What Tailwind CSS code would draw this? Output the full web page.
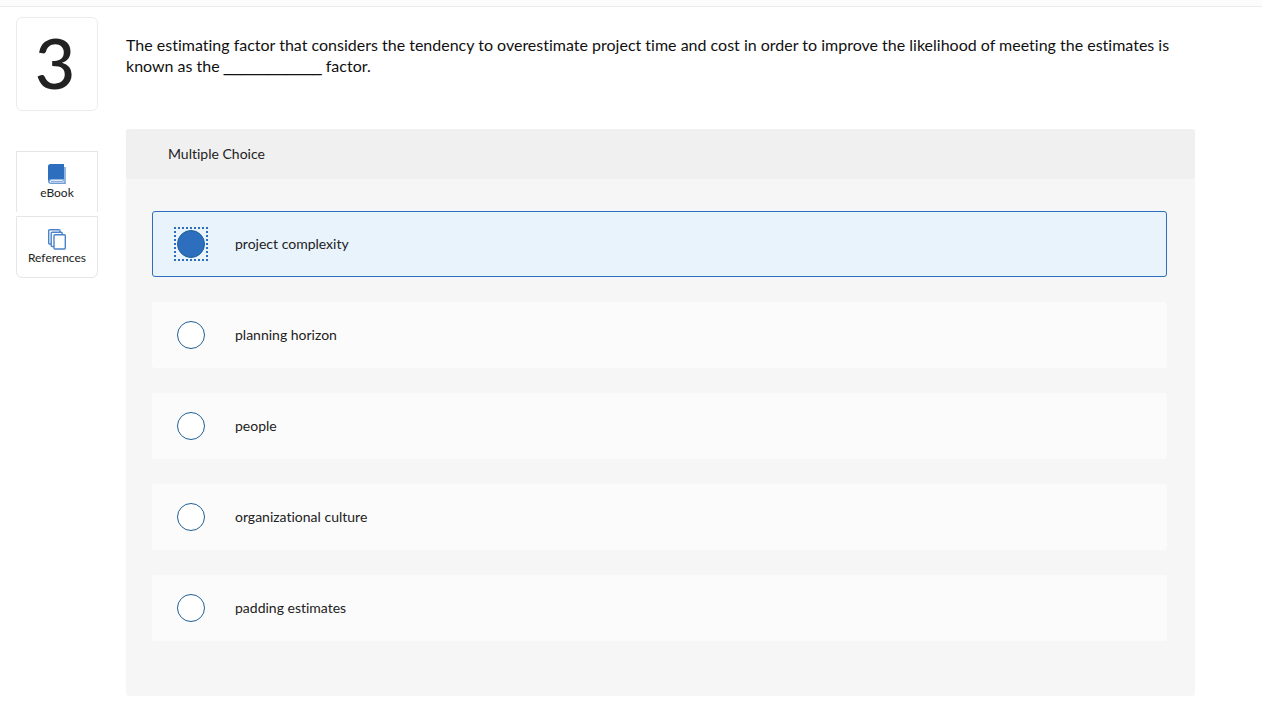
<!DOCTYPE html>
<html lang="en">
<head>
    <meta charset="UTF-8">
    <meta name="viewport" content="width=device-width, initial-scale=1.0">
    <title>Question 3</title>
    <script src="https://cdn.jsdelivr.net/npm/@tailwindcss/browser@4"></script>
</head>
<body class="bg-white font-['Lato','Liberation_Sans',sans-serif] text-[#222] [font-variant-ligatures:none]">
    <header class="h-[7px] bg-[#fcfcfc] border-b border-[#ececec]"></header>

    <div class="flex items-start gap-7 pl-4 pr-[67px] pt-[10px] pb-8">
        <!-- Question number and resources -->
        <aside class="w-[82px] shrink-0">
            <div class="h-[94px] flex items-center justify-center pb-1 pr-1 border border-[#ececec] rounded-md">
                <h1 class="text-[70px] leading-none font-medium">3</h1>
            </div>

            <nav class="mt-10 text-xs leading-4" aria-label="Resources">
                <a href="#ebook" class="h-[61px] flex flex-col items-center pt-3 border border-b-0 border-[#e6e6e6]">
                    <svg class="w-[18px] h-[21px]" viewBox="0 0 18 21" fill="none">
                        <path d="M2.500 0H16V15.500H3Q1.500 15.500 1.500 17.500L0 18V2.500Q0 0 2.500 0Z" fill="#2d6fbe" />
                        <path d="M17 3V19.300H3Q.7 19.300 .7 17.500Q.7 15.800 3 15.800" stroke="#6f9dd6" stroke-width="1.500" />
                        <path d="M3 17.300H15.300V15.500" stroke="#6f9dd6" />
                    </svg>
                    <span>eBook</span>
                </a>
                <a href="#references" class="h-[62px] flex flex-col items-center mt-1 pt-3 border border-[#e6e6e6] rounded-b-md">
                    <svg class="w-[18px] h-[21px]" viewBox="0 0 18 21" fill="#fff" stroke="#4a83c9" stroke-width="1.400">
                        <rect x=".7" y=".7" width="11.300" height="14.300" rx="1" />
                        <rect x="3.200" y="3.200" width="11" height="14.300" rx="1" />
                        <rect x="6" y="5.700" width="11.300" height="14.300" rx="1" />
                    </svg>
                    <span>References</span>
                </a>
            </nav>
        </aside>

        <main class="flex-1 min-w-0">
            <p class="pt-[17px] text-base leading-[21px] text-[#111]">The estimating factor that considers the tendency to overestimate project time and cost in order to improve the likelihood of meeting the estimates is known as the <span class="font-['Liberation_Sans',sans-serif] leading-none">___________</span> factor.</p>

            <form class="mt-[53px] bg-[#f6f6f6] rounded-[3px] text-sm">
                <h2 class="h-[50px] flex items-center pl-[42px] bg-[#f0f0f0] rounded-t-[3px]">Multiple Choice</h2>

                <div class="flex flex-col gap-[25px] pt-8 pl-[26px] pr-7 pb-[55px]" role="radiogroup" aria-label="Multiple Choice">
                    <label class="h-[66px] flex items-center gap-[30px] pl-6 rounded-[3px] border border-transparent bg-[#fbfbfb] has-checked:bg-[#e8f3fc] has-checked:border-[#2d6fbe]">
                        <span class="-m-[3px] p-px border-2 border-dotted border-[#2d6fbe]">
                            <input type="radio" name="answer" checked class="block appearance-none size-7 rounded-full border border-[#1f5f95] bg-[#2d6fbe]">
                        </span>
                        project complexity
                    </label>
                    <label class="h-[66px] flex items-center gap-[30px] pl-6 rounded-[3px] border border-transparent bg-[#fbfbfb]">
                        <input type="radio" name="answer" class="appearance-none size-7 rounded-full border border-[#1f5f95] bg-white">
                        planning horizon
                    </label>
                    <label class="h-[66px] flex items-center gap-[30px] pl-6 rounded-[3px] border border-transparent bg-[#fbfbfb]">
                        <input type="radio" name="answer" class="appearance-none size-7 rounded-full border border-[#1f5f95] bg-white">
                        people
                    </label>
                    <label class="h-[66px] flex items-center gap-[30px] pl-6 rounded-[3px] border border-transparent bg-[#fbfbfb]">
                        <input type="radio" name="answer" class="appearance-none size-7 rounded-full border border-[#1f5f95] bg-white">
                        organizational culture
                    </label>
                    <label class="h-[66px] flex items-center gap-[30px] pl-6 rounded-[3px] border border-transparent bg-[#fbfbfb]">
                        <input type="radio" name="answer" class="appearance-none size-7 rounded-full border border-[#1f5f95] bg-white">
                        padding estimates
                    </label>
                </div>
            </form>
        </main>
    </div>
</body>
</html>
